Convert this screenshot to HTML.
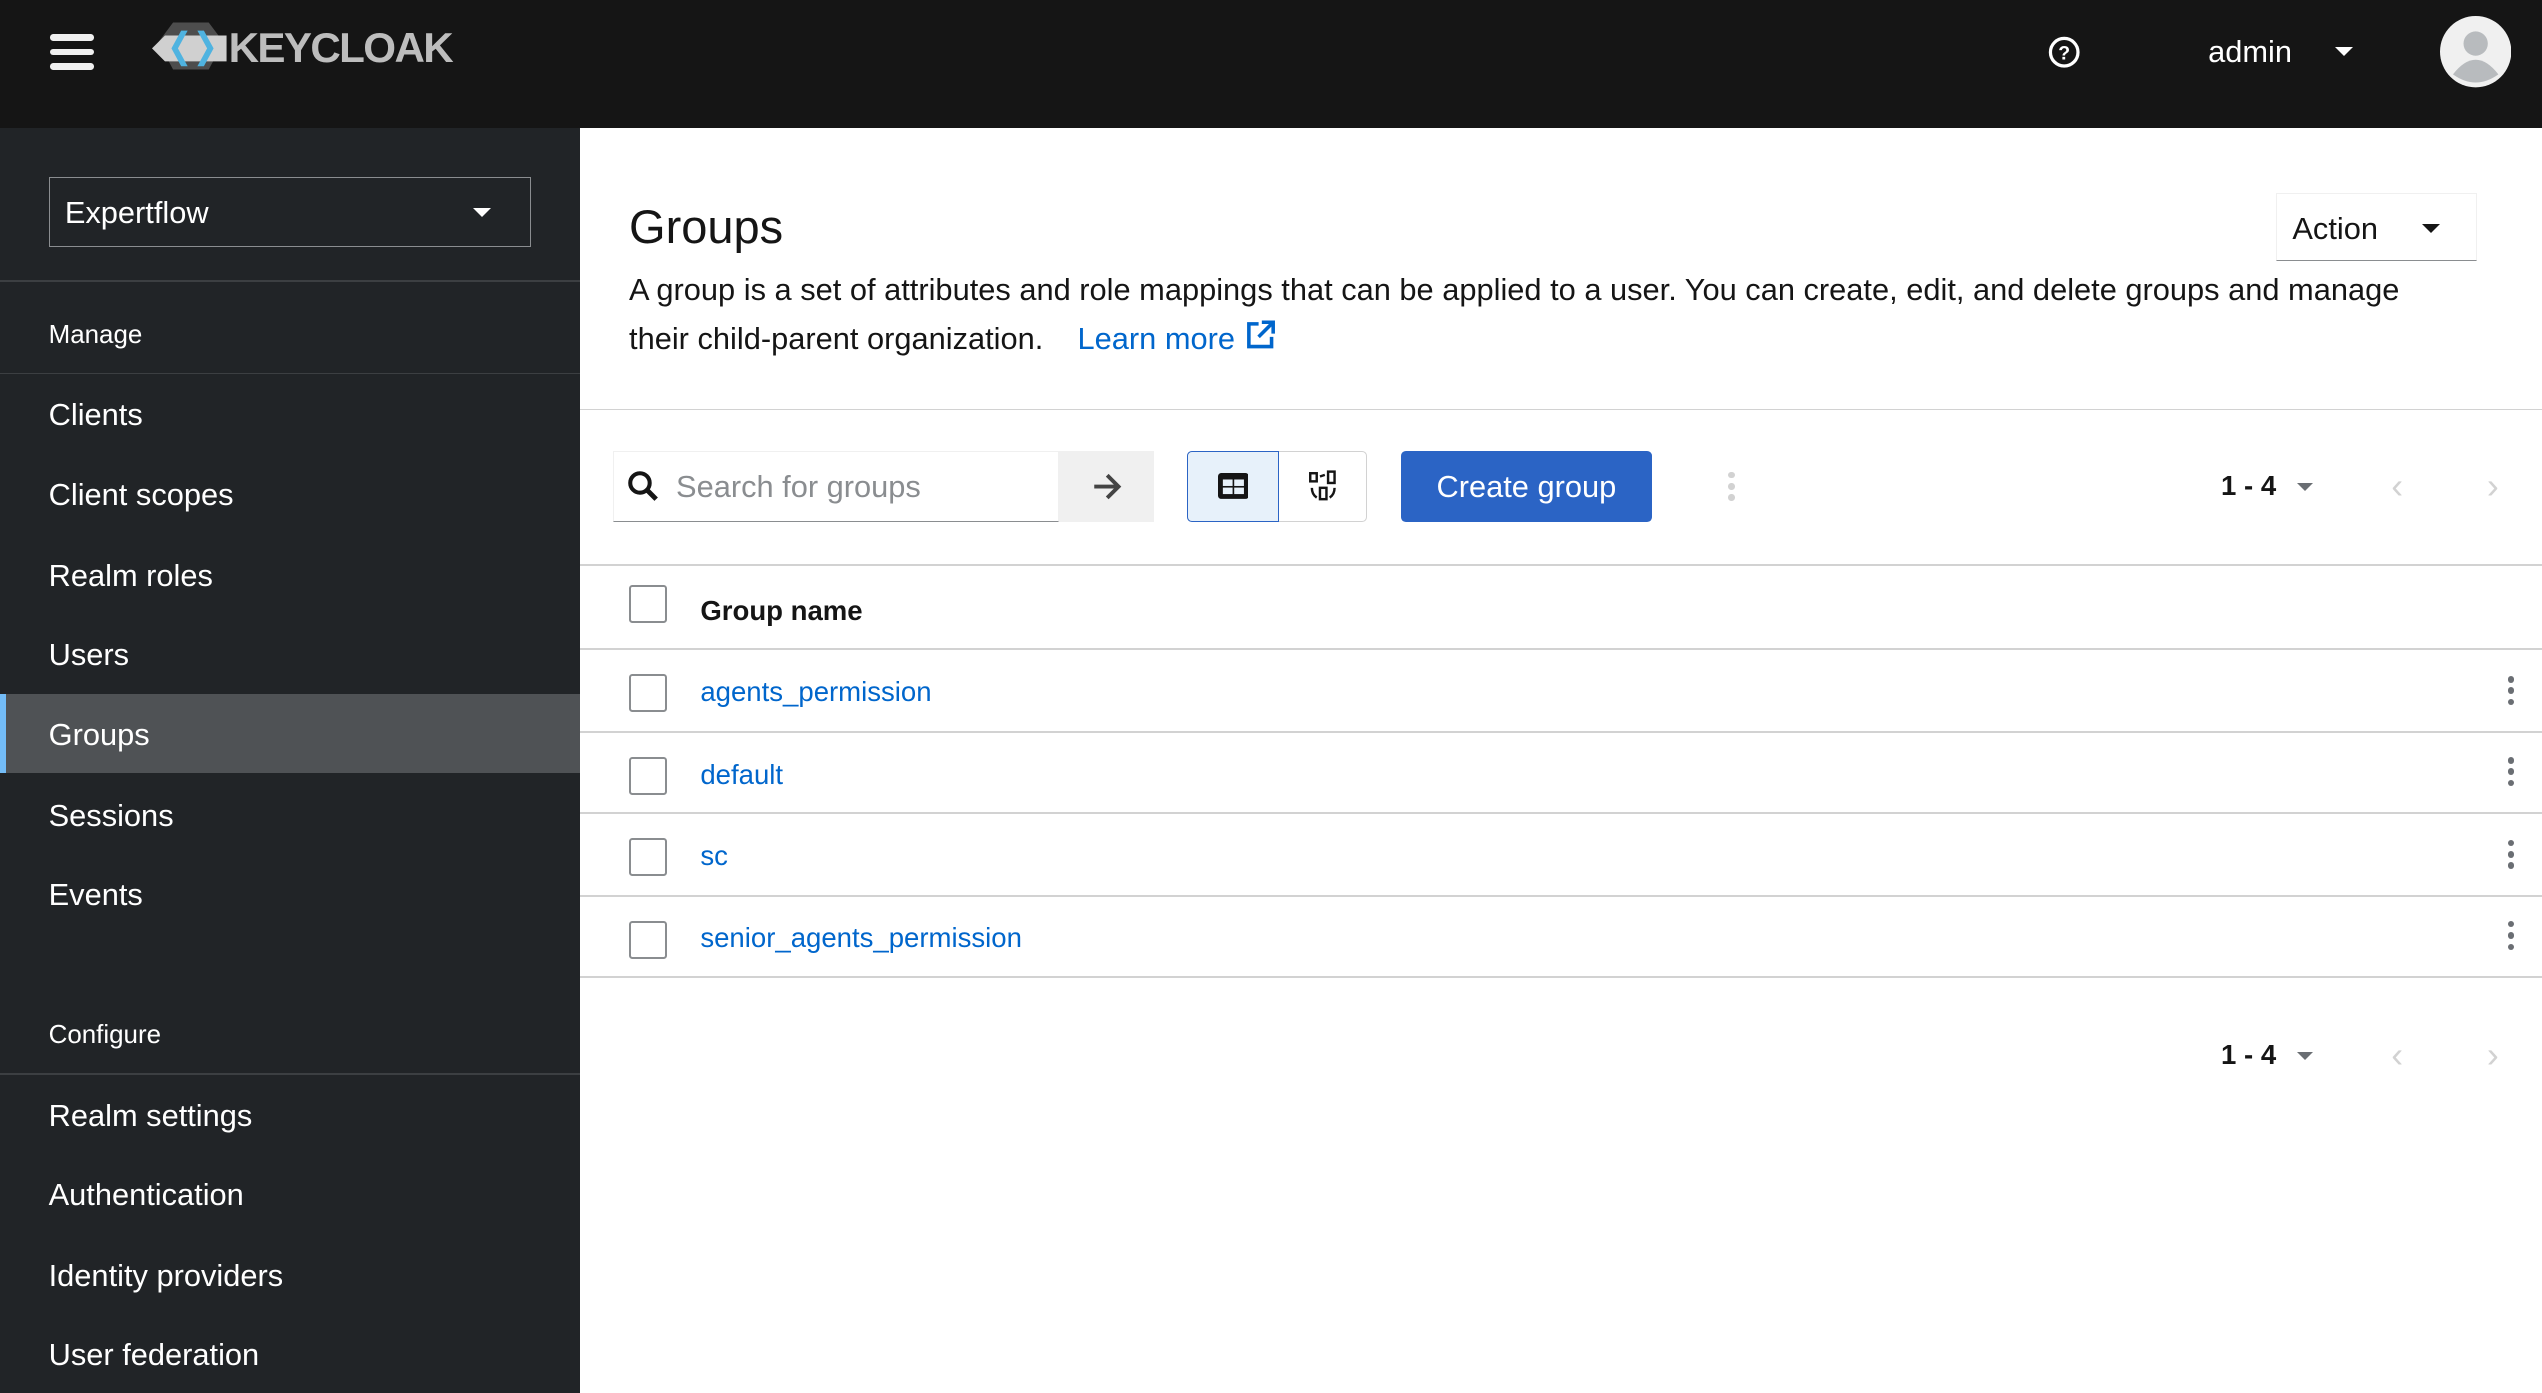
<!DOCTYPE html>
<html><head><meta charset="utf-8"><style>
html{zoom:1.6212}
body{margin:0;width:1568px;height:859px;overflow:hidden;font-family:"Liberation Sans",sans-serif;background:#fff;position:relative;color:#151515}
.a{position:absolute}
.hdr{left:0;top:0;width:1568px;height:79px;background:#151515}
.side{left:0;top:79px;width:358px;height:780px;background:#212427;color:#fff}
.it{position:absolute;left:30px;font-size:19px;color:#fff}
.div{position:absolute;left:0;width:358px;height:1px;background:#3c3f42}
.hl{position:absolute;left:358px;width:1210px;height:1px;background:#d2d2d2}
.cb{position:absolute;left:388px;width:21px;height:21px;border:1.5px solid #8a8d90;border-radius:2px;background:#fff}
.lnk{position:absolute;left:432px;font-size:17px;color:#0066cc}
.keb{position:absolute;left:1547px;width:4px}
.keb i{display:block;width:4px;height:4px;border-radius:2px;background:#6a6e73;margin-bottom:3px}
.chev{position:absolute;font-size:22px;color:#d2d2d2;line-height:20px}
</style></head><body>
<div class="a hdr">
 <div class="a" style="left:31px;top:21px;width:27px">
  <div style="height:4px;background:#f0f0f0;border-radius:2px;margin-bottom:5px"></div>
  <div style="height:4px;background:#f0f0f0;border-radius:2px;margin-bottom:5px"></div>
  <div style="height:4px;background:#f0f0f0;border-radius:2px"></div></div>
 <svg class="a" style="left:94px;top:10px" width="50" height="40" viewBox="0 0 50 40">
  <polygon points="13,8 35,8 44,20 35,37 13,37 4,20" fill="#4d4d4d" transform="translate(0,-4)"/>
  <polygon points="0,16 8,8 46,8 46,24 8,24" fill="#d0d0d0" transform="translate(0,4)"/>
  <polygon points="18,9 12,20 18,31 22,31 16,20 22,9" fill="#4fb3e0"/>
  <polygon points="28,9 34,20 28,31 32,31 38,20 32,9" fill="#4fb3e0"/>
 </svg>
 <div class="a" style="left:141px;top:15px;font-size:26px;font-weight:bold;color:#bdbdbd;letter-spacing:-1px">KEYCLOAK</div>
 <svg class="a" style="left:1263px;top:22px" width="20" height="20" viewBox="0 0 20 20"><circle cx="10" cy="10" r="8.5" fill="none" stroke="#fff" stroke-width="2"/><text x="10" y="14.5" font-size="12" font-weight="bold" text-anchor="middle" fill="#fff" font-family="Liberation Sans">?</text></svg>
 <div class="a" style="left:1362px;top:21px;font-size:19px;color:#fff">admin</div>
 <div class="a" style="left:1440px;top:29px;border-left:6px solid transparent;border-right:6px solid transparent;border-top:6px solid #fff"></div>
 <svg class="a" style="left:1505px;top:10px" width="44" height="44" viewBox="0 0 44 44"><circle cx="22" cy="22" r="22" fill="#f0f0f0"/><circle cx="22" cy="17" r="7.5" fill="#b8bbbe"/><path d="M8,36 Q22,18 36,36 Q22,46 8,36Z" fill="#b8bbbe"/></svg>
</div>
<div class="a side">
 <div class="a" style="left:30px;top:30px;width:296px;height:42px;border:1px solid #8a8d90"></div>
 <div class="it" style="top:41px;left:40px">Expertflow</div>
 <div class="a" style="left:292px;top:49px;border-left:6px solid transparent;border-right:6px solid transparent;border-top:6px solid #fff"></div>
 <div class="div" style="top:94px"></div>
 <div class="it" style="top:119px;font-size:16px">Manage</div>
 <div class="div" style="top:151px"></div>
 <div class="it" style="top:166px">Clients</div>
 <div class="it" style="top:215px">Client scopes</div>
 <div class="it" style="top:265px">Realm roles</div>
 <div class="it" style="top:314px">Users</div>
 <div class="a" style="left:0;top:349px;width:358px;height:49px;background:#4f5255;border-left:4px solid #73bcf7;box-sizing:border-box"></div>
 <div class="it" style="top:363px">Groups</div>
 <div class="it" style="top:413px">Sessions</div>
 <div class="it" style="top:462px">Events</div>
 <div class="it" style="top:551px;font-size:16px">Configure</div>
 <div class="div" style="top:583px"></div>
 <div class="it" style="top:598px">Realm settings</div>
 <div class="it" style="top:647px">Authentication</div>
 <div class="it" style="top:697px">Identity providers</div>
 <div class="it" style="top:746px">User federation</div>
</div>
<div class="a" style="left:388px;top:123px;font-size:29px">Groups</div>
<div class="a" style="left:388px;top:164px;font-size:19px;line-height:30px;width:1120px">A group is a set of attributes and role mappings that can be applied to a user. You can create, edit, and delete groups and manage their child-parent organization.&nbsp;&nbsp;&nbsp; <span style="color:#0066cc">Learn more <svg width="20" height="20" viewBox="0 0 20 20" style="vertical-align:-2px"><path d="M9,3H3V17H17V11" fill="none" stroke="#0066cc" stroke-width="2.2"/><path d="M11,2H18V9M18,2L9,11" fill="none" stroke="#0066cc" stroke-width="2.2"/></svg></span></div>
<div class="a" style="left:1404px;top:119px;width:124px;height:42px;border:1px solid #f0f0f0;border-bottom-color:#8a8d90;box-sizing:border-box"></div>
<div class="a" style="left:1414px;top:130px;font-size:19px">Action</div>
<div class="a" style="left:1494px;top:138px;border-left:6px solid transparent;border-right:6px solid transparent;border-top:6px solid #151515"></div>
<div class="hl" style="top:252px"></div>
<div class="a" style="left:378px;top:278px;width:275px;height:44px;border:1px solid #f0f0f0;border-bottom:1px solid #8a8d90;box-sizing:border-box"></div>
<svg class="a" style="left:387px;top:290px" width="20" height="20" viewBox="0 0 20 20"><circle cx="8" cy="8" r="6" fill="none" stroke="#151515" stroke-width="2.5"/><path d="M12.5,12.5L18,18" stroke="#151515" stroke-width="3"/></svg>
<div class="a" style="left:417px;top:289px;font-size:19px;color:#8a8d90">Search for groups</div>
<div class="a" style="left:653px;top:278px;width:59px;height:44px;background:#f0f0f0"></div>
<svg class="a" style="left:673px;top:291px" width="20" height="18" viewBox="0 0 20 18"><path d="M2,9H17M10,2L17,9L10,16" fill="none" stroke="#444" stroke-width="2.4"/></svg>
<div class="a" style="left:732px;top:278px;width:111px;height:44px;border:1px solid #d2d2d2;border-radius:3px;box-sizing:border-box"></div>
<div class="a" style="left:732px;top:278px;width:57px;height:44px;border:1px solid #2b64c5;border-radius:3px 0 0 3px;background:#e7f1fa;box-sizing:border-box"></div>
<svg class="a" style="left:751px;top:292px" width="19" height="16" viewBox="0 0 19 16"><rect width="19" height="16" rx="2" fill="#151515"/><rect x="3" y="4" width="6" height="4" fill="#e7f1fa"/><rect x="10" y="4" width="6" height="4" fill="#e7f1fa"/><rect x="3" y="9" width="6" height="4" fill="#e7f1fa"/><rect x="10" y="9" width="6" height="4" fill="#e7f1fa"/></svg>
<svg class="a" style="left:806px;top:290px" width="20" height="20" viewBox="0 0 20 20" fill="none" stroke="#151515" stroke-width="1.5"><rect x="2" y="2" width="4" height="5"/><rect x="13" y="1" width="4" height="7"/><rect x="8" y="11" width="4" height="7"/><path d="M8,4L11,3M3,11Q3,15 6,17M17,11Q17,15 14,17"/></svg>
<div class="a" style="left:864px;top:278px;width:155px;height:44px;background:#2b64c5;border-radius:3px;color:#fff;font-size:19px;text-align:center;line-height:44px">Create group</div>
<div class="keb" style="left:1066px;top:291px"><i style="background:#d2d2d2"></i><i style="background:#d2d2d2"></i><i style="background:#d2d2d2"></i></div>
<div class="a" style="left:1370px;top:290px;font-size:17px;font-weight:bold">1 - 4</div>
<div class="a" style="left:1417px;top:298px;border-left:5px solid transparent;border-right:5px solid transparent;border-top:5px solid #6a6e73"></div>
<div class="chev" style="left:1475px;top:290px">‹</div>
<div class="chev" style="left:1534px;top:290px">›</div>
<div class="hl" style="top:348px"></div>
<div class="cb" style="top:361px"></div>
<div class="a" style="left:432px;top:367px;font-size:17px;font-weight:bold">Group name</div>
<div class="hl" style="top:400px"></div>
<div class="cb" style="top:416px"></div><div class="lnk" style="top:417px">agents_permission</div><div class="keb" style="top:417px"><i></i><i></i><i></i></div>
<div class="hl" style="top:451px"></div>
<div class="cb" style="top:467px"></div><div class="lnk" style="top:468px">default</div><div class="keb" style="top:467px"><i></i><i></i><i></i></div>
<div class="hl" style="top:501px"></div>
<div class="cb" style="top:517px"></div><div class="lnk" style="top:518px">sc</div><div class="keb" style="top:518px"><i></i><i></i><i></i></div>
<div class="hl" style="top:552px"></div>
<div class="cb" style="top:568px"></div><div class="lnk" style="top:569px">senior_agents_permission</div><div class="keb" style="top:568px"><i></i><i></i><i></i></div>
<div class="hl" style="top:602px"></div>
<div class="a" style="left:1370px;top:641px;font-size:17px;font-weight:bold">1 - 4</div>
<div class="a" style="left:1417px;top:649px;border-left:5px solid transparent;border-right:5px solid transparent;border-top:5px solid #6a6e73"></div>
<div class="chev" style="left:1475px;top:641px">‹</div>
<div class="chev" style="left:1534px;top:641px">›</div>
</body></html>
